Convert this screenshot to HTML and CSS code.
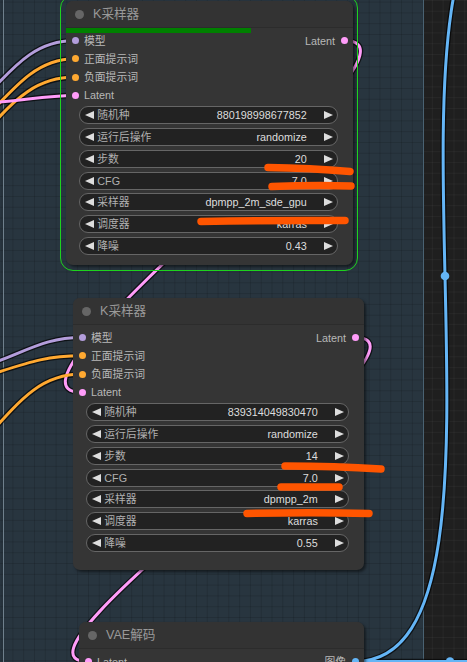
FILE: index.html
```html
<!DOCTYPE html>
<html>
<head>
  <meta charset="utf-8">
  <title>ComfyUI - K采样器</title>
  <link rel="stylesheet" href="styles.css">
</head>
<body>
  <div class="canvas">
    <div class="group"></div>
    <div class="group-edge"></div>

    <!-- links are drawn under the nodes -->
    <svg class="links" width="467" height="662" viewBox="0 0 467 662">
      <g class="link-border">
        <path d="M-20,103 C20,58 40,40.5 75,40.5"/>
        <path d="M-20,124 C20,80 40,58.8 75,58.8"/>
        <path d="M-20,140 C15,95 40,77.1 75,77.1"/>
        <path d="M-20,103 C20,102 40,95.4 75,95.4"/>
        <path d="M344,40.5 C454,40.5 -29,392.5 82,392.5"/>
        <path d="M-20,368 C30,350 45,337.5 82,337.5"/>
        <path d="M-20,378 C30,362 45,355.8 82,355.8"/>
        <path d="M-20,445 C20,400 40,374.1 82,374.1"/>
        <path d="M355,337.5 C460,337.5 -17,661.5 88,661.5"/>
        <path d="M355,661.5 C553,661.5 337,-109 535,-109"/>
        <path d="M355,661.5 L545,661.5"/>
      </g>
      <g class="link">
        <path class="model" d="M-20,103 C20,58 40,40.5 75,40.5"/>
        <path class="cond" d="M-20,124 C20,80 40,58.8 75,58.8"/>
        <path class="cond" d="M-20,140 C15,95 40,77.1 75,77.1"/>
        <path class="latent" d="M-20,103 C20,102 40,95.4 75,95.4"/>
        <path class="latent" d="M344,40.5 C454,40.5 -29,392.5 82,392.5"/>
        <path class="model" d="M-20,368 C30,350 45,337.5 82,337.5"/>
        <path class="cond" d="M-20,378 C30,362 45,355.8 82,355.8"/>
        <path class="cond" d="M-20,445 C20,400 40,374.1 82,374.1"/>
        <path class="latent" d="M355,337.5 C460,337.5 -17,661.5 88,661.5"/>
        <path class="image" d="M355,661.5 C553,661.5 337,-109 535,-109"/>
        <path class="image" d="M355,661.5 L545,661.5"/>
      </g>
      <circle class="link-marker" cx="445" cy="276" r="4.3"/>
      <circle class="link-marker" cx="450" cy="661.5" r="4.3"/>
    </svg>

    <div class="node node-1 running">
      <div class="node-title"><span class="title-dot"></span>K采样器</div>
      <div class="node-body">
        <div class="progress" style="width: 64.5%"></div>
        <div class="slots">
          <div class="slot-row">
            <div class="slot in"><span class="dot model"></span>模型</div>
            <div class="slot out">Latent<span class="dot latent"></span></div>
          </div>
          <div class="slot-row"><div class="slot in"><span class="dot cond"></span>正面提示词</div></div>
          <div class="slot-row"><div class="slot in"><span class="dot cond"></span>负面提示词</div></div>
          <div class="slot-row"><div class="slot in"><span class="dot latent"></span>Latent</div></div>
        </div>
        <div class="widgets">
          <div class="widget"><span class="arrow left"></span><span class="w-label">随机种</span><span class="w-value">880198998677852</span><span class="arrow right"></span></div>
          <div class="widget"><span class="arrow left"></span><span class="w-label">运行后操作</span><span class="w-value">randomize</span><span class="arrow right"></span></div>
          <div class="widget"><span class="arrow left"></span><span class="w-label">步数</span><span class="w-value">20</span><span class="arrow right"></span></div>
          <div class="widget"><span class="arrow left"></span><span class="w-label">CFG</span><span class="w-value">7.0</span><span class="arrow right"></span></div>
          <div class="widget"><span class="arrow left"></span><span class="w-label">采样器</span><span class="w-value">dpmpp_2m_sde_gpu</span><span class="arrow right"></span></div>
          <div class="widget"><span class="arrow left"></span><span class="w-label">调度器</span><span class="w-value">karras</span><span class="arrow right"></span></div>
          <div class="widget"><span class="arrow left"></span><span class="w-label">降噪</span><span class="w-value">0.43</span><span class="arrow right"></span></div>
        </div>
      </div>
    </div>

    <div class="node node-2">
      <div class="node-title"><span class="title-dot"></span>K采样器</div>
      <div class="node-body">
        <div class="slots">
          <div class="slot-row">
            <div class="slot in"><span class="dot model"></span>模型</div>
            <div class="slot out">Latent<span class="dot latent"></span></div>
          </div>
          <div class="slot-row"><div class="slot in"><span class="dot cond"></span>正面提示词</div></div>
          <div class="slot-row"><div class="slot in"><span class="dot cond"></span>负面提示词</div></div>
          <div class="slot-row"><div class="slot in"><span class="dot latent"></span>Latent</div></div>
        </div>
        <div class="widgets">
          <div class="widget"><span class="arrow left"></span><span class="w-label">随机种</span><span class="w-value">839314049830470</span><span class="arrow right"></span></div>
          <div class="widget"><span class="arrow left"></span><span class="w-label">运行后操作</span><span class="w-value">randomize</span><span class="arrow right"></span></div>
          <div class="widget"><span class="arrow left"></span><span class="w-label">步数</span><span class="w-value">14</span><span class="arrow right"></span></div>
          <div class="widget"><span class="arrow left"></span><span class="w-label">CFG</span><span class="w-value">7.0</span><span class="arrow right"></span></div>
          <div class="widget"><span class="arrow left"></span><span class="w-label">采样器</span><span class="w-value">dpmpp_2m</span><span class="arrow right"></span></div>
          <div class="widget"><span class="arrow left"></span><span class="w-label">调度器</span><span class="w-value">karras</span><span class="arrow right"></span></div>
          <div class="widget"><span class="arrow left"></span><span class="w-label">降噪</span><span class="w-value">0.55</span><span class="arrow right"></span></div>
        </div>
      </div>
    </div>

    <div class="node node-3">
      <div class="node-title"><span class="title-dot"></span>VAE解码</div>
      <div class="node-body">
        <div class="slots">
          <div class="slot-row">
            <div class="slot in"><span class="dot latent"></span>Latent</div>
            <div class="slot out">图像<span class="dot image"></span></div>
          </div>
        </div>
      </div>
    </div>

    <!-- hand drawn marks on top of the screenshot -->
    <svg class="marks" width="467" height="662" viewBox="0 0 467 662">
      <path d="M268,167.5 Q310,168 350,171.5"/>
      <path d="M272,186.5 Q312,185 351,186"/>
      <path d="M201,221.5 Q275,220 345,220.5"/>
      <path d="M285,466 Q335,466 381,469"/>
      <path d="M281,487 L339,487"/>
      <path d="M247,513.5 Q310,512 369,513.5"/>
    </svg>
  </div>
</body>
</html>
```

FILE: styles.css
```css
/* node graph canvas */
body {
  margin: 0;
  background-color: #1f1f1f;
  font-family: "Liberation Sans", Arial, "Noto Sans CJK SC", sans-serif;
  overflow: hidden;
}

.canvas {
  position: relative;
  width: 467px;
  height: 662px;
  overflow: hidden;
  background-color: #1f1f1f;
  background-image:
    linear-gradient(rgba(255, 255, 255, 0.035) 1px, transparent 1px),
    linear-gradient(90deg, rgba(255, 255, 255, 0.035) 1px, transparent 1px);
  background-size: 10.8px 10.8px;
}

.group {
  position: absolute;
  left: -20px;
  top: -20px;
  width: 443px;
  height: 720px;
  border-right: 1px solid #4a6272;
  background-color: #28353f;
  background-image:
    linear-gradient(rgba(0, 0, 0, 0.13) 1px, transparent 1px),
    linear-gradient(90deg, rgba(0, 0, 0, 0.13) 1px, transparent 1px);
  background-size: 10.8px 10.8px;
}

.group-edge {
  position: absolute;
  left: 3px;
  top: 0;
  width: 1px;
  height: 662px;
  background: #6f808c;
}

/* links */
.links, .marks {
  position: absolute;
  left: 0;
  top: 0;
}

.links path {
  fill: none;
}

.link-border path {
  stroke: rgba(0, 0, 0, 0.65);
  stroke-width: 5.6;
}

.link path {
  stroke-width: 3;
}

.link .model { stroke: #b39ddb; }
.link .cond { stroke: #ffa931; }
.link .latent { stroke: #ff9cf9; }
.link .image { stroke: #64b5f6; }

.link-marker {
  fill: #64b5f6;
}

/* nodes */
.node {
  position: absolute;
  display: flex;
  flex-direction: column;
  border-radius: 7px;
  background-color: #353535;
  box-shadow: 2px 2px 3px rgba(0, 0, 0, 0.5);
}

.node-1 { left: 66px; top: 1px; width: 287px; height: 264px; }
.node-2 { left: 73px; top: 298px; width: 291px; height: 272px; }
.node-3 { left: 79px; top: 622px; width: 285px; height: 80px; }

.node.running::after {
  content: "";
  position: absolute;
  left: -6px;
  top: -6px;
  right: -5px;
  bottom: -6px;
  border: 1.3px solid #1ed21e;
  border-radius: 13px;
}

.node-title {
  display: flex;
  align-items: center;
  gap: 9px;
  height: 27px;
  box-sizing: border-box;
  padding-left: 9px;
  border-radius: 7px 7px 0 0;
  border-bottom: 1px solid #2c2c2c;
  background-color: #333;
  color: #999;
  font-size: 12.6px;
  line-height: 27px;
}

.title-dot {
  width: 9px;
  height: 9px;
  border-radius: 50%;
  background-color: #666;
}

.node-body {
  position: relative;
  flex: 1;
  padding-top: 3.4px;
}

.progress {
  position: absolute;
  left: 0;
  top: 0;
  height: 5px;
  background-color: #008000;
}

.slot-row {
  display: flex;
  justify-content: space-between;
  align-items: center;
  height: 18.3px;
}

.slot {
  display: flex;
  align-items: center;
  gap: 5.5px;
  color: #b8b8b8;
  font-size: 10.8px;
  line-height: 18px;
}

.slot.in { padding-left: 5.5px; }
.slot.out { padding-right: 5.5px; }

.dot {
  width: 7px;
  height: 7px;
  border-radius: 50%;
}

.dot.model { background-color: #b39ddb; }
.dot.cond { background-color: #ffa931; }
.dot.latent { background-color: #ff9cf9; }
.dot.image { background-color: #64b5f6; }

/* widgets */
.widgets {
  display: flex;
  flex-direction: column;
  gap: 3.8px;
  margin: 1.6px 14.7px 0 13.3px;
}

.widget {
  display: flex;
  align-items: center;
  height: 18px;
  box-sizing: border-box;
  padding: 0 4.4px;
  border: 1px solid #666;
  border-radius: 9px;
  background-color: #222;
  font-size: 10.8px;
  line-height: 16px;
}

.arrow {
  width: 0;
  height: 0;
  border-style: solid;
}

.arrow.left {
  border-width: 4.5px 9px 4.5px 0;
  border-color: transparent #ddd transparent transparent;
  margin-right: 3.6px;
}

.arrow.right {
  border-width: 4.5px 0 4.5px 9px;
  border-color: transparent transparent transparent #ddd;
  margin-left: 17.1px;
}

.w-label {
  color: #b0b0b0;
}

.w-value {
  margin-left: auto;
  color: #ddd;
}

/* annotation strokes */
.marks path {
  fill: none;
  stroke: #ff5500;
  stroke-width: 7.5;
  stroke-linecap: round;
}
```
